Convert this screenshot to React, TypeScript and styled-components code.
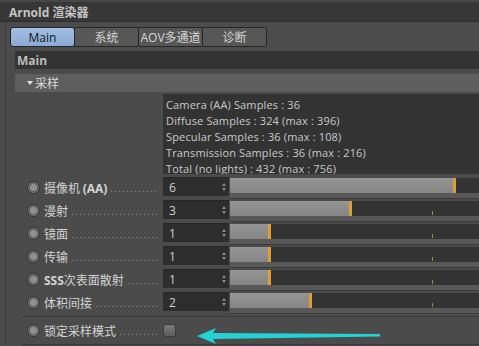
import React from "react";
import styled, { createGlobalStyle } from "styled-components";

const Global = createGlobalStyle`
  html, body { margin: 0; padding: 0; background: #4b4b4b; }
  body { font-family: "Open Sans", "Noto Sans CJK SC", sans-serif; }
`;

const Root = styled.div`
  width: 479px;
  height: 346px;
  overflow: hidden;
  position: relative;
  background: #4b4b4b;
  font-family: "Open Sans", "Noto Sans CJK SC", sans-serif;
  font-size: 12px;
  color: #d2d2d2;
`;

const TitleBar = styled.div`
  height: 19px;
  border-top: 2px solid #474747;
  background: #373737;
  display: flex;
  align-items: center;
  padding-left: 9px;
  font-weight: 700;
  font-size: 12px;
  color: #c4c4c4;
  border-bottom: 1px solid #2c2c2c;
`;

const Panel = styled.div`
  margin-left: 5px;
  border-left: 1px solid #3a3a3a;
  display: flex;
  flex-direction: column;
`;

const TabStrip = styled.div`
  height: 28px;
  box-sizing: border-box;
  padding: 5px 0 0 4px;
  display: flex;
  background: #4c4c4c;
`;

const Tab = styled.div<{ $active?: boolean }>`
  width: 65px;
  height: 20px;
  box-sizing: border-box;
  display: flex;
  align-items: center;
  justify-content: center;
  border: 1px solid #262626;
  margin-left: -1px;
  border-radius: ${(p) => (p.$active ? "3px" : "2px")};
  background: ${(p) => (p.$active ? "linear-gradient(#a3bfe3, #8aaad6)" : "#575757")};
  color: ${(p) => (p.$active ? "#141414" : "#d6d6d6")};
  font-size: 12px;
  &:first-child { margin-left: 0; }
`;

const Section = styled.div`
  padding-left: 9px;
  display: flex;
  flex-direction: column;
`;

const GroupHeader = styled.div`
  margin-top: 1px;
  height: 18px;
  background: #333333;
  display: flex;
  align-items: center;
  padding-left: 2px;
  font-weight: 700;
  color: #bdbdbd;
`;

const SubHeader = styled.div`
  margin-top: 5px;
  height: 18px;
  background: #5e5e5e;
  display: flex;
  align-items: center;
  padding-left: 12px;
  color: #dcdcdc;
  gap: 1px;
`;

const Caret = styled.span`
  width: 0;
  height: 0;
  border-left: 3px solid transparent;
  border-right: 3px solid transparent;
  border-top: 4px solid #e0e0e0;
  margin-right: 1px;
`;

const InfoBox = styled.div`
  margin: 2px 0 0 148px;
  height: 80px;
  box-sizing: border-box;
  background: #333333;
  padding: 3px 0 0 3px;
  overflow: hidden;
  color: #c9c9c9;
  font-size: 11px;
  letter-spacing: 0.15px;
  line-height: 16px;
`;

const Rows = styled.div`
  margin-top: 2px;
  padding-left: 16px;
  display: flex;
  flex-direction: column;
`;

const Row = styled.div`
  height: 23px;
  display: grid;
  grid-template-columns: 141px 67px 1fr;
`;

const LabelCell = styled.div`
  display: flex;
  align-items: center;
  padding-left: 5px;
  padding-right: 5px;
  gap: 4px;
`;

const Radio = styled.span`
  flex: none;
  width: 13px;
  height: 13px;
  box-sizing: border-box;
  border-radius: 50%;
  border: 1px solid #2e2e2e;
  background: radial-gradient(circle at 50% 50%, #909090 0 3.2px, #5c5c5c 3.8px 4.3px, #7a7a7a 4.8px);
`;

const LabelText = styled.span`
  flex: none;
  color: #d4d4d4;
  font-family: "Noto Sans CJK SC", sans-serif;
  font-size: 12px;
  b { font-family: "Open Sans", sans-serif; font-weight: 700; }
`;

const Leader = styled.span`
  flex: 1;
  align-self: center;
  height: 1px;
  margin-top: 8px;
  background-image: linear-gradient(to right, #8c8c8c 1px, transparent 1px);
  background-size: 4px 1px;
  background-repeat: repeat-x;
`;

const NumField = styled.div`
  margin-top: 1px;
  height: 19px;
  width: 66px;
  box-sizing: border-box;
  background: #2d2d2d;
  border-top: 1px solid #262626;
  display: flex;
  align-items: center;
  padding-left: 6px;
  position: relative;
  color: #d0d0d0;
`;

const Spin = styled.span`
  position: absolute;
  right: 3px;
  top: 5px;
  display: flex;
  flex-direction: column;
  gap: 2px;
  &::before, &::after {
    content: "";
    width: 0;
    height: 0;
    border-left: 2.5px solid transparent;
    border-right: 2.5px solid transparent;
  }
  &::before { border-bottom: 3px solid #8a8a8a; }
  &::after { border-top: 3px solid #8a8a8a; }
`;

const SliderCell = styled.div`
  display: flex;
  flex-direction: column;
`;

const Track = styled.div`
  margin-top: 2px;
  height: 15px;
  background: #333333;
  position: relative;
`;

const Fill = styled.div`
  height: 100%;
  background: linear-gradient(#959595, #858585);
  border-right: 3px solid #e29d2c;
  box-sizing: border-box;
`;

const Tick = styled.span`
  position: absolute;
  left: 202px;
  bottom: 1px;
  width: 1px;
  height: 4px;
  background: #9a8a46;
`;

const Band = styled.div`
  height: 5px;
  background: #585858;
  border-bottom: 1px solid #3b3b3b;
`;

const LockRow = styled.div`
  margin-top: 2px;
  height: 27px;
  border-top: 1px solid #3a3a3a;
  border-bottom: 1px solid #3a3a3a;
  display: grid;
  grid-template-columns: 141px 1fr;
`;

const CheckBox = styled.span`
  align-self: center;
  width: 13px;
  height: 13px;
  box-sizing: border-box;
  border-radius: 3px;
  border: 1px solid #3a3a3a;
  background: linear-gradient(#7a7a7a, #5e5e5e);
`;

const Arrow = styled.svg`
  position: absolute;
  left: 194px;
  top: 326px;
`;

const rows = [
  { pre: "摄像机 ", bold: "(AA)", post: "", v: "6", fill: 226 },
  { pre: "漫射", bold: "", post: "", v: "3", fill: 122 },
  { pre: "镜面", bold: "", post: "", v: "1", fill: 41 },
  { pre: "传输", bold: "", post: "", v: "1", fill: 41 },
  { pre: "", bold: "SSS", post: "次表面散射", v: "1", fill: 41 },
  { pre: "体积间接", bold: "", post: "", v: "2", fill: 82 },
];

const info = [
  "Camera (AA) Samples : 36",
  "Diffuse Samples : 324 (max : 396)",
  "Specular Samples : 36 (max : 108)",
  "Transmission Samples : 36 (max : 216)",
  "Total (no lights) : 432 (max : 756)",
];

export default function App() {
  return (
    <Root>
      <Global />
      <TitleBar>Arnold 渲染器</TitleBar>
      <Panel>
        <TabStrip>
          <Tab $active>Main</Tab>
          <Tab>系统</Tab>
          <Tab>AOV多通道</Tab>
          <Tab>诊断</Tab>
        </TabStrip>
        <Section>
          <GroupHeader>Main</GroupHeader>
          <SubHeader>
            <Caret />
            采样
          </SubHeader>
          <InfoBox>
            {info.map((t) => (
              <div key={t}>{t}</div>
            ))}
          </InfoBox>
        </Section>
        <Rows>
          {rows.map((r, i) => (
            <Row key={i}>
              <LabelCell>
                <Radio />
                <LabelText>
                  {r.pre}
                  {r.bold && <b>{r.bold}</b>}
                  {r.post}
                </LabelText>
                <Leader />
              </LabelCell>
              <NumField>
                {r.v}
                <Spin />
              </NumField>
              <SliderCell>
                <Track>
                  <Fill style={{ width: r.fill }} />
                  <Tick />
                </Track>
                <Band />
              </SliderCell>
            </Row>
          ))}
          <LockRow>
            <LabelCell>
              <Radio />
              <LabelText>锁定采样模式</LabelText>
              <Leader />
            </LabelCell>
            <CheckBox />
          </LockRow>
        </Rows>
      </Panel>
      <Arrow width="190" height="20" viewBox="0 0 190 20">
        <polygon points="3,10 22,2 19,7 186,8 186,10.5 19,13 22,18" fill="#22d3d6" />
      </Arrow>
    </Root>
  );
}
